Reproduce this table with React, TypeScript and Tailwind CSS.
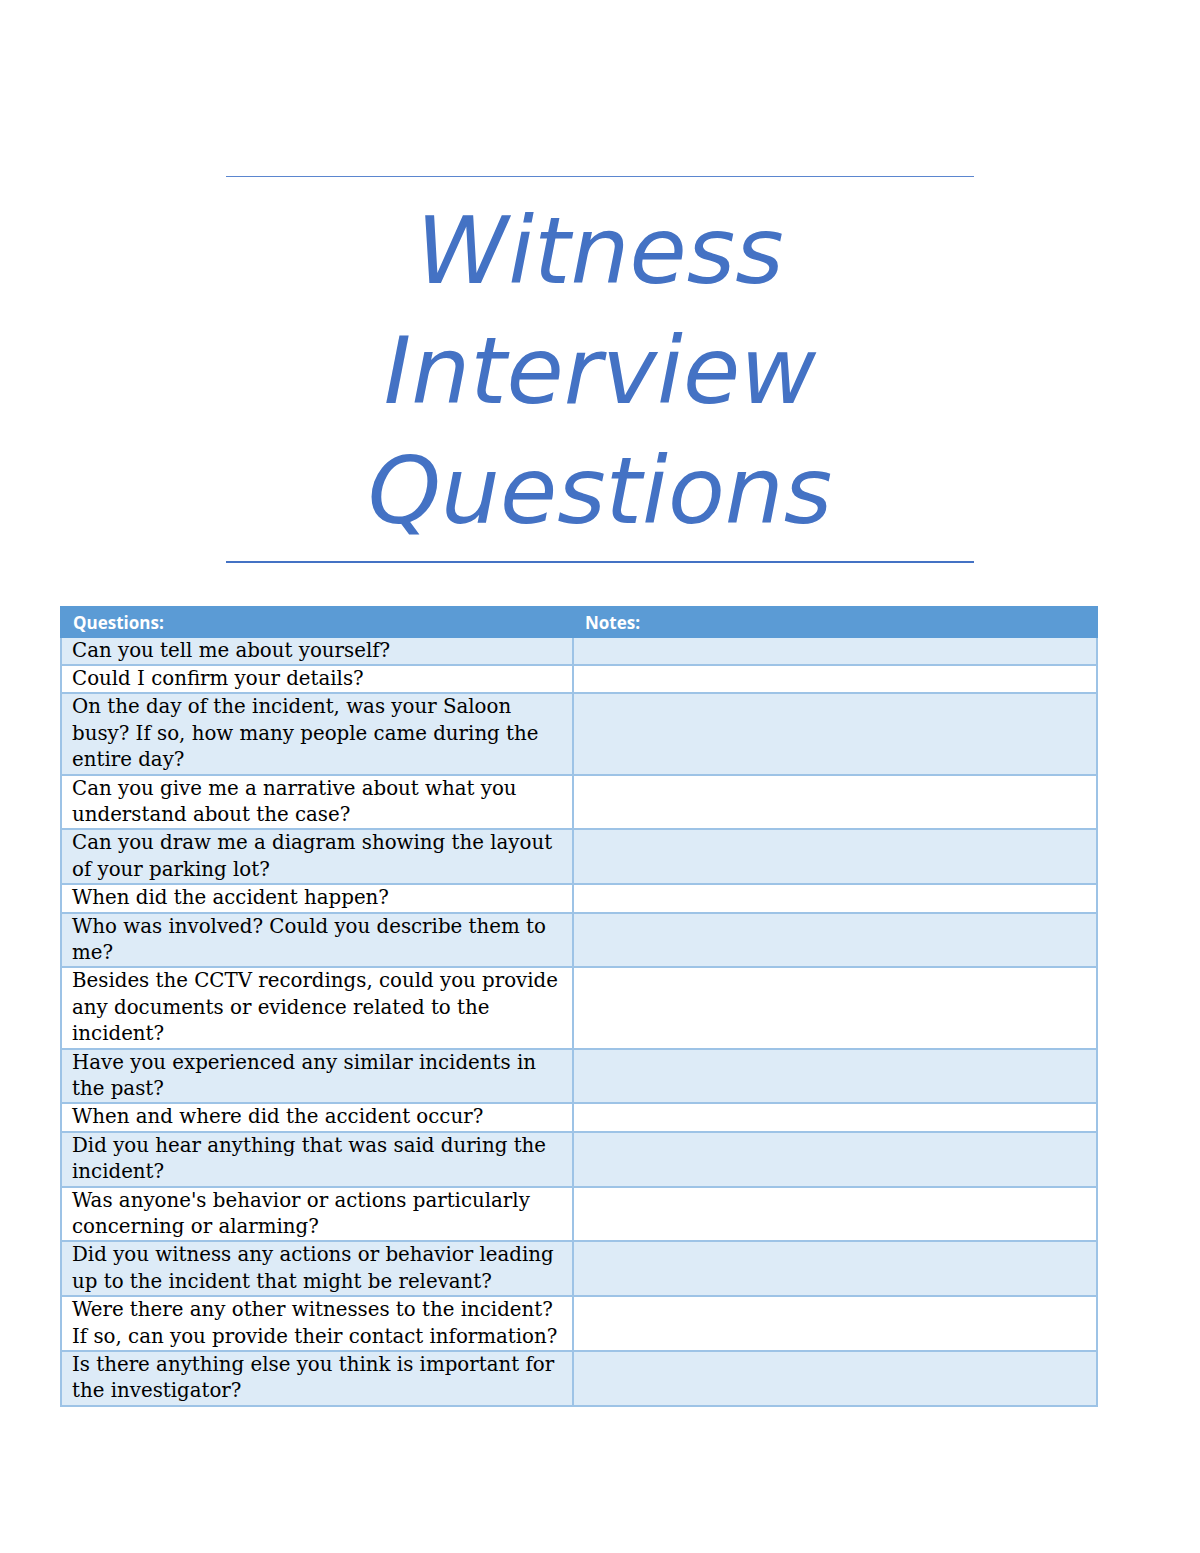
const questions: string[][] = [
  ['Can you tell me about yourself?'],
  ['Could I confirm your details?'],
  ['On the day of the incident, was your Saloon', 'busy? If so, how many people came during the', 'entire day?'],
  ['Can you give me a narrative about what you', 'understand about the case?'],
  ['Can you draw me a diagram showing the layout', 'of your parking lot?'],
  ['When did the accident happen?'],
  ['Who was involved? Could you describe them to', 'me?'],
  ['Besides the CCTV recordings, could you provide', 'any documents or evidence related to the', 'incident?'],
  ['Have you experienced any similar incidents in', 'the past?'],
  ['When and where did the accident occur?'],
  ['Did you hear anything that was said during the', 'incident?'],
  ["Was anyone's behavior or actions particularly", 'concerning or alarming?'],
  ['Did you witness any actions or behavior leading', 'up to the incident that might be relevant?'],
  ['Were there any other witnesses to the incident?', 'If so, can you provide their contact information?'],
  ['Is there anything else you think is important for', 'the investigator?'],
];

export default function App() {
  return (
    <div className="w-[1200px] h-[1553px] bg-white">
      {/* title block */}
      <div className="w-[748px] mx-auto pt-[176px]">
        <div className="border-t border-[#5b86cf]" />
        <h1 className="pt-[14px] pb-[10px] text-center italic text-[#4472c4] text-[93px] leading-[120px] font-['DejaVu_Sans',sans-serif]">
          Witness
          <br />
          Interview
          <br />
          Questions
        </h1>
        <div className="border-t-2 border-[#4472c4]" />
      </div>

      {/* question table */}
      <table className="mt-[43px] ml-[60px] w-[1038px] border-collapse table-fixed">
        <thead>
          <tr className="bg-[#5b9bd5] h-[29px]">
            <th className="w-[512px] text-left align-middle pl-[11px] pt-[2px] text-white text-[17px] font-bold font-['Open_Sans',sans-serif] border-2 border-[#5b9bd5]">
              Questions:
            </th>
            <th className="text-left align-middle pl-[11px] pt-[2px] text-white text-[17px] font-bold font-['Open_Sans',sans-serif] border-2 border-[#5b9bd5]">
              Notes:
            </th>
          </tr>
        </thead>
        <tbody>
          {questions.map((lines, i) => (
            <tr key={i} className={i % 2 === 0 ? 'bg-[#ddebf7]' : 'bg-white'}>
              <td className="align-top pl-[10px] pr-[2px] border-2 border-[#9dc3e6] text-black text-[19.8px] leading-[26.4px] font-['DejaVu_Serif',serif]">
                {lines.map((l, j) => (
                  <div key={j} className="whitespace-nowrap">{l}</div>
                ))}
              </td>
              <td className="border-2 border-[#9dc3e6]" />
            </tr>
          ))}
        </tbody>
      </table>
    </div>
  );
}
